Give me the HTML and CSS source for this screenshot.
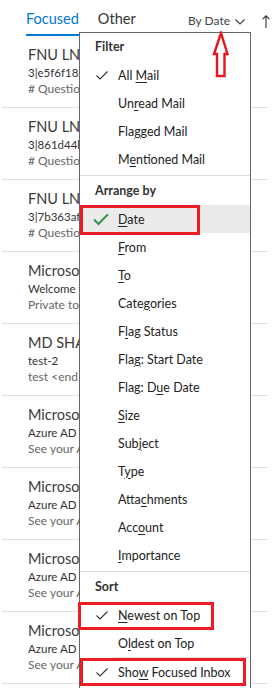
FILE: index.html
```html
<!DOCTYPE html>
<html>
<head>
<meta charset="utf-8">
<link rel="stylesheet" href="styles.css">
</head>
<body>
<div class="app">
  <div class="tabs">
    <div class="tab active">Focused</div>
    <div class="tab">Other</div>
    <div class="sortby"><span>By Date</span>
      <svg class="chev" width="10" height="6" viewBox="0 0 10 6"><polyline points="0.5,0.5 5,5 9.5,0.5" fill="none" stroke="#444" stroke-width="1.2"/></svg>
    </div>
    <svg class="uparrow" width="8" height="13" viewBox="0 0 8 13"><path d="M4 0.8 V13 M0.6 4.2 L4 0.8 L7.4 4.2" fill="none" stroke="#333" stroke-width="1.1"/></svg>
  </div>
  <div class="list">
    <div class="row"><div class="name">FNU LNU</div><div class="subj">3|e5f6f182 Question</div><div class="prev"># Question posted</div></div>
    <div class="row"><div class="name">FNU LNU</div><div class="subj">3|861d44b Question</div><div class="prev"># Question posted</div></div>
    <div class="row"><div class="name">FNU LNU</div><div class="subj">3|7b363af Question</div><div class="prev"># Question posted</div></div>
    <div class="row"><div class="name">Microsoft</div><div class="subj">Welcome to</div><div class="prev">Private to you</div></div>
    <div class="row"><div class="name">MD SHAHID</div><div class="subj">test-2</div><div class="prev">test &lt;end&gt;</div></div>
    <div class="row"><div class="name">Microsoft</div><div class="subj">Azure AD Identity</div><div class="prev">See your Azure</div></div>
    <div class="row"><div class="name">Microsoft</div><div class="subj">Azure AD Identity</div><div class="prev">See your Azure</div></div>
    <div class="row"><div class="name">Microsoft</div><div class="subj">Azure AD Identity</div><div class="prev">See your Azure</div></div>
    <div class="row"><div class="name">Microsoft</div><div class="subj">Azure AD Identity</div><div class="prev">See your Azure</div></div>
  </div>

  <div class="menu">
    <div class="hdr">Filter</div>
    <div class="item"><span class="ck"><svg width="12" height="9" viewBox="0 0 12 9"><polyline points="0.5,4.5 4,8 11.5,0.5" fill="none" stroke="#333" stroke-width="1.1"/></svg></span><span class="lbl">All <u>M</u>ail</span></div>
    <div class="item"><span class="ck"></span><span class="lbl">Un<u>r</u>ead Mail</span></div>
    <div class="item"><span class="ck"></span><span class="lbl">Fla<u>g</u>ged Mail</span></div>
    <div class="item"><span class="ck"></span><span class="lbl">M<u>e</u>ntioned Mail</span></div>
    <div class="sep"></div>
    <div class="hdr">Arrange by</div>
    <div class="item sel"><span class="ck"><svg class="gck" width="16" height="13" viewBox="0 0 16 13"><polyline points="1,6.5 5.5,11 15,1.2" fill="none" stroke="#3a9a4c" stroke-width="2.2"/></svg></span><span class="lbl"><u>D</u>ate</span></div>
    <div class="item"><span class="ck"></span><span class="lbl"><u>F</u>rom</span></div>
    <div class="item"><span class="ck"></span><span class="lbl"><u>T</u>o</span></div>
    <div class="item"><span class="ck"></span><span class="lbl">Cate<u>g</u>ories</span></div>
    <div class="item"><span class="ck"></span><span class="lbl">F<u>l</u>ag Status</span></div>
    <div class="item"><span class="ck"></span><span class="lbl">Fla<u>g</u>: Start Date</span></div>
    <div class="item"><span class="ck"></span><span class="lbl">Flag: D<u>u</u>e Date</span></div>
    <div class="item"><span class="ck"></span><span class="lbl"><u>S</u>ize</span></div>
    <div class="item"><span class="ck"></span><span class="lbl">Sub<u>j</u>ect</span></div>
    <div class="item"><span class="ck"></span><span class="lbl">T<u>y</u>pe</span></div>
    <div class="item"><span class="ck"></span><span class="lbl">Atta<u>c</u>hments</span></div>
    <div class="item"><span class="ck"></span><span class="lbl">Acc<u>o</u>unt</span></div>
    <div class="item"><span class="ck"></span><span class="lbl"><u>I</u>mportance</span></div>
    <div class="sep"></div>
    <div class="hdr">Sort</div>
    <div class="item"><span class="ck"><svg width="12" height="9" viewBox="0 0 12 9"><polyline points="0.5,4.5 4,8 11.5,0.5" fill="none" stroke="#333" stroke-width="1.1"/></svg></span><span class="lbl"><u>N</u>ewest on Top</span></div>
    <div class="item"><span class="ck"></span><span class="lbl">O<u>l</u>dest on Top</span></div>
    <div class="sep sep-indent"></div>
    <div class="item"><span class="ck"><svg width="12" height="9" viewBox="0 0 12 9"><polyline points="0.5,4.5 4,8 11.5,0.5" fill="none" stroke="#333" stroke-width="1.1"/></svg></span><span class="lbl">Sho<u>w</u> Focused Inbox</span></div>
  </div>

  <div class="mark mark-date"></div>
  <div class="mark mark-newest"></div>
  <div class="mark mark-focused"></div>
  <svg class="redarrow" width="20" height="48" viewBox="0 0 20 48"><polygon points="10,2 16.5,23 13.5,23 13.5,45 6,45 6,23 3,23" fill="#fff" stroke="#e8141c" stroke-width="2.4" stroke-linejoin="miter"/></svg>
</div>
</body>
</html>
```
FILE: styles.css
```css
* { box-sizing: border-box; }
html, body { margin: 0; padding: 0; background: #fff; }
body { font-family: "Segoe UI", Lato, "Open Sans", sans-serif; color: #333; }
.app { position: relative; width: 278px; height: 688px; overflow: hidden; }

.tabs { display: flex; align-items: flex-start; height: 36px; padding-left: 26px; padding-right: 8px; }
.tab { flex: none; height: 36px; padding-top: 9px; font-size: 14.5px; line-height: 20px; color: #333; margin-right: 19px; white-space: nowrap; }
.tab.active { color: #0078d4; border-bottom: 2px solid #0078d4; }
.sortby { flex: none; margin-left: auto; padding-top: 12px; font-size: 12px; line-height: 18px; color: #444; display: flex; align-items: center; white-space: nowrap; }
.chev { margin-left: 5px; margin-top: 1px; }
.uparrow { flex: none; margin-left: 17px; margin-top: 15px; }

.list { padding: 0 10px 0 2px; }
.row { height: 72px; border-bottom: 1px solid #e1e1e1; padding: 9px 0 0 26px; overflow: hidden; }
.row > div { width: 52px; white-space: nowrap; overflow: hidden; }
.name { font-size: 14.5px; line-height: 20px; color: #3a3a3a; font-weight: 400; }
.subj { font-size: 11.5px; line-height: 16px; color: #333; }
.prev { font-size: 12px; line-height: 16px; color: #666; }

.menu { position: absolute; left: 79px; top: 32px; width: 172px; height: 700px; background: #fff; border: 1px solid #666; border-bottom: none; }
.hdr { height: 28px; line-height: 28px; padding-left: 15px; font-size: 12.5px; font-weight: 700; color: #333; }
.item { height: 28px; display: flex; align-items: center; font-size: 12.5px; color: #222; }
.lbl { white-space: nowrap; }
.item u { text-decoration-thickness: 1px; text-underline-offset: 2px; }
.item.sel { background: #ebebeb; }
.ck { width: 38px; height: 28px; display: flex; align-items: center; padding-left: 16px; flex: none; }
.ck .gck { margin-left: -3px; }
.sep { height: 4px; border-top: 1px solid transparent; }
.sep::after { content: ""; display: block; height: 1px; background: #dcdcdc; margin-top: 1px; }
.sep.sep-indent { height: 1px; border: none; margin-left: 33px; background: #e1e1e1; }
.sep.sep-indent::after { display: none; }

.mark { position: absolute; border: 3px solid #ec1c24; }
.mark-date { left: 80px; top: 205px; width: 120px; height: 30px; }
.mark-newest { left: 78px; top: 602px; width: 136px; height: 28px; }
.mark-focused { left: 80px; top: 658px; width: 166px; height: 28px; }
.redarrow { position: absolute; left: 211px; top: 31px; }
```
